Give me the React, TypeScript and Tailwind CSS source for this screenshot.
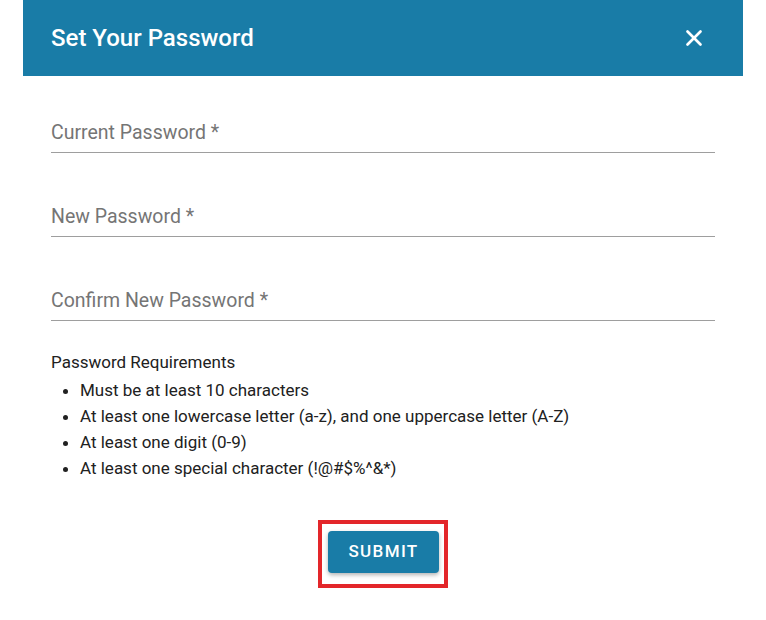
import { X } from 'lucide-react';

const requirements = [
  'Must be at least 10 characters',
  'At least one lowercase letter (a-z), and one uppercase letter (A-Z)',
  'At least one digit (0-9)',
  'At least one special character (!@#$%^&*)',
];

function Field({ label, first }: { label: string; first?: boolean }) {
  return (
    <div className={`flex flex-col justify-end ${first ? 'h-[77px]' : 'h-[84px]'}`}>
      <div className="border-b border-[#9e9e9e] pb-[5px] text-[19.5px] leading-[28px] text-[#757575]">
        {label}
      </div>
    </div>
  );
}

export default function App() {
  return (
    <div className="h-[620px] w-[766px] bg-white font-['Roboto',sans-serif]">
      <div className="mx-[23px] flex h-[620px] flex-col bg-white">
        <div className="flex h-[76px] items-center justify-between bg-[#197ca7] pl-[28px] pr-[36px]">
          <h2 className="text-[24px] font-medium text-white">Set Your Password</h2>
          <X className="h-[26px] w-[26px] text-white" strokeWidth={2.5} />
        </div>

        <div className="px-[28px]">
          <Field label="Current Password *" first />
          <Field label="New Password *" />
          <Field label="Confirm New Password *" />

          <div className="mt-[28px] text-[17px] leading-[26px] text-[#212121]">
            <p className="mb-[2px]">Password Requirements</p>
            <ul className="ml-[29px] list-disc">
              {requirements.map((r) => (
                <li key={r}>{r}</li>
              ))}
            </ul>
          </div>

          <div className="mt-[39px] flex justify-center">
            <div className="border-[4px] border-[#e3262a] pb-[11px] pl-[6px] pr-[5px] pt-[7px]">
              <button className="h-[42px] rounded-[4px] bg-[#197ca7] px-[20px] text-[17px] font-medium tracking-[0.08em] text-white shadow-[0_2px_4px_rgba(0,0,0,0.3)]">
                SUBMIT
              </button>
            </div>
          </div>
        </div>
      </div>
    </div>
  );
}
